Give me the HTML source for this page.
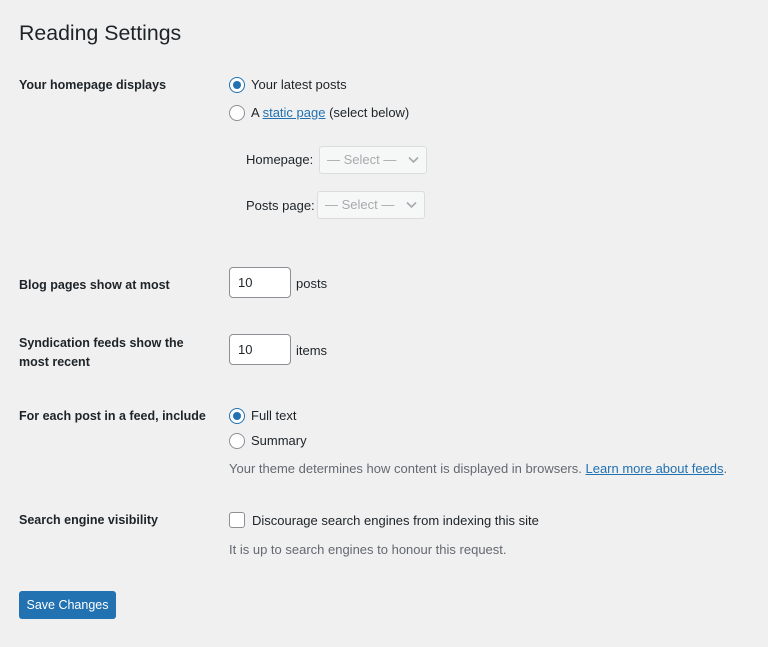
<!DOCTYPE html>
<html><head><style>
body{margin:0;width:768px;height:647px;background:#f0f0f1;font-family:"Liberation Sans",sans-serif;font-size:13px;color:#1d2327;position:relative;overflow:hidden}
.a{position:absolute;white-space:nowrap;line-height:16px}
.l{font-weight:bold;font-size:12.5px}
.r{position:absolute;width:14px;height:14px;border:1px solid #8c8f94;border-radius:50%;background:#fff}
.r.on::after{content:"";position:absolute;left:3px;top:3px;width:8px;height:8px;border-radius:50%;background:#2271b1}
.r.on{border-color:#2271b1}
.in{position:absolute;width:62px;height:31px;border:1px solid #8c8f94;border-radius:4px;background:#fff;box-sizing:border-box;padding-left:8px;line-height:29px;font-size:13px}
.sel{position:absolute;width:108px;height:28px;border:1px solid #dcdcde;border-radius:3px;background:#f6f7f7;box-sizing:border-box;color:#a7aaad;line-height:26px;padding-left:7px;font-size:13px}
.sel svg{position:absolute;right:7px;top:9px}
a{color:#2271b1}
.d{color:#646970}
</style></head><body>
<div class="a" style="left:19px;top:21px;font-size:21.3px;line-height:24px">Reading Settings</div>

<div class="a l" style="left:19px;top:77px">Your homepage displays</div>
<div class="r on" style="left:229px;top:77px"></div>
<div class="a" style="left:251px;top:77px">Your latest posts</div>
<div class="r" style="left:229px;top:105px"></div>
<div class="a" style="left:251px;top:105px">A <a href="#">static page</a> (select below)</div>
<div class="a" style="left:246px;top:152px">Homepage:</div>
<div class="sel" style="left:319px;top:146px">— Select —<svg width="11" height="8" viewBox="0 0 11 8"><path d="M1 1.5l4.5 4.5 4.5-4.5" fill="none" stroke="#a7aaad" stroke-width="1.6"/></svg></div>
<div class="a" style="left:246px;top:198px">Posts page:</div>
<div class="sel" style="left:317px;top:191px">— Select —<svg width="11" height="8" viewBox="0 0 11 8"><path d="M1 1.5l4.5 4.5 4.5-4.5" fill="none" stroke="#a7aaad" stroke-width="1.6"/></svg></div>

<div class="a l" style="left:19px;top:277px">Blog pages show at most</div>
<div class="in" style="left:229px;top:267px">10</div>
<div class="a" style="left:296px;top:276px">posts</div>

<div class="a l" style="left:19px;top:334px;line-height:19px">Syndication feeds show the<br>most recent</div>
<div class="in" style="left:229px;top:334px">10</div>
<div class="a" style="left:296px;top:343px">items</div>

<div class="a l" style="left:19px;top:408px">For each post in a feed, include</div>
<div class="r on" style="left:229px;top:408px"></div>
<div class="a" style="left:251px;top:408px">Full text</div>
<div class="r" style="left:229px;top:433px"></div>
<div class="a" style="left:251px;top:433px">Summary</div>
<div class="a d" style="left:229px;top:461px">Your theme determines how content is displayed in browsers. <a href="#">Learn more about feeds</a>.</div>

<div class="a l" style="left:19px;top:512px">Search engine visibility</div>
<div style="position:absolute;left:229px;top:512px;width:14px;height:14px;border:1px solid #8c8f94;border-radius:3px;background:#fff"></div>
<div class="a" style="left:252px;top:513px">Discourage search engines from indexing this site</div>
<div class="a d" style="left:229px;top:542px">It is up to search engines to honour this request.</div>

<div style="position:absolute;left:19px;top:591px;width:97px;height:28px;background:#2271b1;border-radius:3px;color:#fff;font-size:12.5px;line-height:28px;text-align:center">Save Changes</div>
</body></html>
